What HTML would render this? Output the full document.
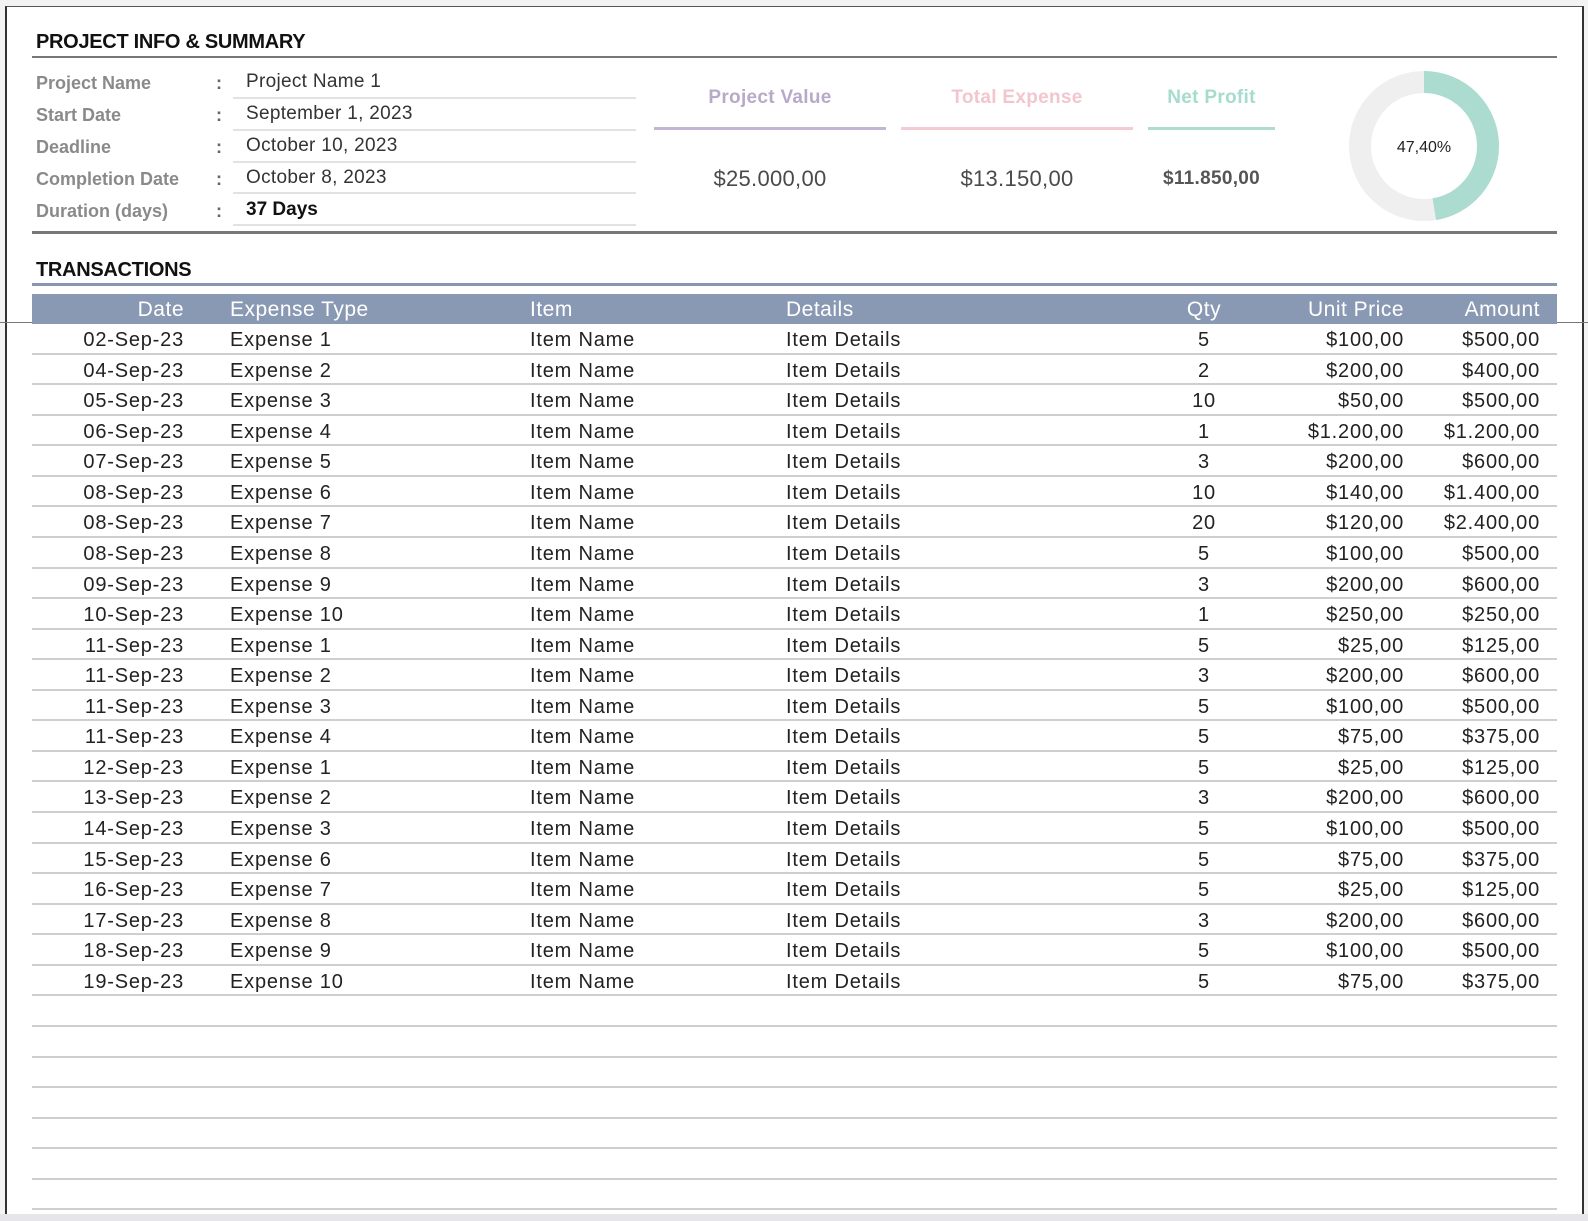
<!DOCTYPE html>
<html><head><meta charset="utf-8"><style>
*{margin:0;padding:0;box-sizing:border-box}
body{width:1588px;height:1221px;background:#f3f3f3;position:relative;overflow:hidden;font-family:"Liberation Sans",sans-serif;color:#222}
.sheet{position:absolute;left:5px;top:6px;width:1579px;height:1215px;background:#fff;border-left:2px solid #333;border-top:1px solid #555;border-right:2px solid #333}
.a{position:absolute;white-space:nowrap}
.h1{font-weight:bold;font-size:20px;color:#111;letter-spacing:-0.3px}
.lbl{font-weight:bold;font-size:18px;color:#8a8a8a;left:36px}
.col{left:216px;font-size:18px;color:#666;font-weight:bold}
.val{left:246px;font-size:19px;color:#333;letter-spacing:0.3px}
.ul{position:absolute;left:233px;width:403px;height:2px;background:#e2e2e2}
.kt{font-weight:bold;font-size:19px;text-align:center;letter-spacing:0.3px}
.kv{font-size:22px;color:#4a4a4a;text-align:center;letter-spacing:0.3px}
.hdr{position:absolute;left:32px;top:294px;width:1525px;height:30px;background:#8a99b3;color:#fff;font-size:21px;letter-spacing:0.5px}
.rows{position:absolute;left:32px;top:324px;width:1525px}
.r{position:relative;height:30.57px;border-bottom:2px solid #cfcfcf;font-size:20px;color:#222;letter-spacing:0.8px}
.r span{position:absolute;top:5px;white-space:nowrap}
.hdr span{position:absolute;top:4px;white-space:nowrap}
.c1{right:1373px;text-align:right}
.c2{left:198px}.c3{left:498px}.c4{left:754px}
.c5{left:1152px;width:40px;text-align:center}
.c6{right:153px}.c7{right:17px}
</style></head><body>
<div class="sheet"></div>
<div class="a" style="left:0;top:322px;width:1588px;height:1px;background:#777"></div>
<div class="a h1" style="left:36px;top:31px">PROJECT INFO &amp; SUMMARY</div>
<div class="a" style="left:32px;top:56px;width:1525px;height:2px;background:#777"></div>

<div class="a lbl" style="top:73px">Project Name</div><div class="a col" style="top:73px">:</div><div class="a val" style="top:71px">Project Name 1</div><div class="ul" style="top:97px"></div>
<div class="a lbl" style="top:105px">Start Date</div><div class="a col" style="top:105px">:</div><div class="a val" style="top:103px">September 1, 2023</div><div class="ul" style="top:129px"></div>
<div class="a lbl" style="top:137px">Deadline</div><div class="a col" style="top:137px">:</div><div class="a val" style="top:135px">October 10, 2023</div><div class="ul" style="top:161px"></div>
<div class="a lbl" style="top:169px">Completion Date</div><div class="a col" style="top:169px">:</div><div class="a val" style="top:167px">October 8, 2023</div><div class="ul" style="top:192px"></div>
<div class="a lbl" style="top:201px">Duration (days)</div><div class="a col" style="top:201px">:</div><div class="a val" style="top:199px;font-weight:bold;color:#111;letter-spacing:0">37 Days</div><div class="ul" style="top:224px"></div>

<div class="a kt" style="left:654px;width:232px;top:87px;color:#b8a9cb">Project Value</div>
<div class="a" style="left:654px;top:127px;width:232px;height:3px;background:#c3b6d4"></div>
<div class="a kv" style="left:654px;width:232px;top:166px">$25.000,00</div>
<div class="a kt" style="left:901px;width:232px;top:87px;color:#f2c6cf">Total Expense</div>
<div class="a" style="left:901px;top:127px;width:232px;height:3px;background:#f2cbd3"></div>
<div class="a kv" style="left:901px;width:232px;top:166px">$13.150,00</div>
<div class="a kt" style="left:1148px;width:127px;top:87px;color:#a6dccd">Net Profit</div>
<div class="a" style="left:1148px;top:127px;width:127px;height:3px;background:#aedccf"></div>
<div class="a kv" style="left:1140px;width:143px;top:168px;font-size:19px;font-weight:bold;color:#555">$11.850,00</div>

<svg class="a" style="left:1344px;top:66px" width="160" height="160" viewBox="0 0 160 160">
<circle cx="80" cy="80" r="64" fill="none" stroke="#efefef" stroke-width="22"/>
<circle cx="80" cy="80" r="64" fill="none" stroke="#abdccf" stroke-width="22" stroke-dasharray="190.6 402.1" transform="rotate(-90 80 80)"/>
<text x="80" y="86" text-anchor="middle" font-family="Liberation Sans" font-size="16" fill="#222">47,40%</text>
</svg>

<div class="a" style="left:32px;top:231px;width:1525px;height:3px;background:#777"></div>
<div class="a h1" style="left:36px;top:259px">TRANSACTIONS</div>
<div class="a" style="left:32px;top:283px;width:1525px;height:3px;background:#8a96ae"></div>

<div class="hdr"><span class="c1">Date</span><span class="c2">Expense Type</span><span class="c3">Item</span><span class="c4">Details</span><span class="c5">Qty</span><span class="c6">Unit Price</span><span class="c7">Amount</span></div>

<div class="rows">
<div class="r"><span class="c1">02-Sep-23</span><span class="c2">Expense 1</span><span class="c3">Item Name</span><span class="c4">Item Details</span><span class="c5">5</span><span class="c6">$100,00</span><span class="c7">$500,00</span></div>
<div class="r"><span class="c1">04-Sep-23</span><span class="c2">Expense 2</span><span class="c3">Item Name</span><span class="c4">Item Details</span><span class="c5">2</span><span class="c6">$200,00</span><span class="c7">$400,00</span></div>
<div class="r"><span class="c1">05-Sep-23</span><span class="c2">Expense 3</span><span class="c3">Item Name</span><span class="c4">Item Details</span><span class="c5">10</span><span class="c6">$50,00</span><span class="c7">$500,00</span></div>
<div class="r"><span class="c1">06-Sep-23</span><span class="c2">Expense 4</span><span class="c3">Item Name</span><span class="c4">Item Details</span><span class="c5">1</span><span class="c6">$1.200,00</span><span class="c7">$1.200,00</span></div>
<div class="r"><span class="c1">07-Sep-23</span><span class="c2">Expense 5</span><span class="c3">Item Name</span><span class="c4">Item Details</span><span class="c5">3</span><span class="c6">$200,00</span><span class="c7">$600,00</span></div>
<div class="r"><span class="c1">08-Sep-23</span><span class="c2">Expense 6</span><span class="c3">Item Name</span><span class="c4">Item Details</span><span class="c5">10</span><span class="c6">$140,00</span><span class="c7">$1.400,00</span></div>
<div class="r"><span class="c1">08-Sep-23</span><span class="c2">Expense 7</span><span class="c3">Item Name</span><span class="c4">Item Details</span><span class="c5">20</span><span class="c6">$120,00</span><span class="c7">$2.400,00</span></div>
<div class="r"><span class="c1">08-Sep-23</span><span class="c2">Expense 8</span><span class="c3">Item Name</span><span class="c4">Item Details</span><span class="c5">5</span><span class="c6">$100,00</span><span class="c7">$500,00</span></div>
<div class="r"><span class="c1">09-Sep-23</span><span class="c2">Expense 9</span><span class="c3">Item Name</span><span class="c4">Item Details</span><span class="c5">3</span><span class="c6">$200,00</span><span class="c7">$600,00</span></div>
<div class="r"><span class="c1">10-Sep-23</span><span class="c2">Expense 10</span><span class="c3">Item Name</span><span class="c4">Item Details</span><span class="c5">1</span><span class="c6">$250,00</span><span class="c7">$250,00</span></div>
<div class="r"><span class="c1">11-Sep-23</span><span class="c2">Expense 1</span><span class="c3">Item Name</span><span class="c4">Item Details</span><span class="c5">5</span><span class="c6">$25,00</span><span class="c7">$125,00</span></div>
<div class="r"><span class="c1">11-Sep-23</span><span class="c2">Expense 2</span><span class="c3">Item Name</span><span class="c4">Item Details</span><span class="c5">3</span><span class="c6">$200,00</span><span class="c7">$600,00</span></div>
<div class="r"><span class="c1">11-Sep-23</span><span class="c2">Expense 3</span><span class="c3">Item Name</span><span class="c4">Item Details</span><span class="c5">5</span><span class="c6">$100,00</span><span class="c7">$500,00</span></div>
<div class="r"><span class="c1">11-Sep-23</span><span class="c2">Expense 4</span><span class="c3">Item Name</span><span class="c4">Item Details</span><span class="c5">5</span><span class="c6">$75,00</span><span class="c7">$375,00</span></div>
<div class="r"><span class="c1">12-Sep-23</span><span class="c2">Expense 1</span><span class="c3">Item Name</span><span class="c4">Item Details</span><span class="c5">5</span><span class="c6">$25,00</span><span class="c7">$125,00</span></div>
<div class="r"><span class="c1">13-Sep-23</span><span class="c2">Expense 2</span><span class="c3">Item Name</span><span class="c4">Item Details</span><span class="c5">3</span><span class="c6">$200,00</span><span class="c7">$600,00</span></div>
<div class="r"><span class="c1">14-Sep-23</span><span class="c2">Expense 3</span><span class="c3">Item Name</span><span class="c4">Item Details</span><span class="c5">5</span><span class="c6">$100,00</span><span class="c7">$500,00</span></div>
<div class="r"><span class="c1">15-Sep-23</span><span class="c2">Expense 6</span><span class="c3">Item Name</span><span class="c4">Item Details</span><span class="c5">5</span><span class="c6">$75,00</span><span class="c7">$375,00</span></div>
<div class="r"><span class="c1">16-Sep-23</span><span class="c2">Expense 7</span><span class="c3">Item Name</span><span class="c4">Item Details</span><span class="c5">5</span><span class="c6">$25,00</span><span class="c7">$125,00</span></div>
<div class="r"><span class="c1">17-Sep-23</span><span class="c2">Expense 8</span><span class="c3">Item Name</span><span class="c4">Item Details</span><span class="c5">3</span><span class="c6">$200,00</span><span class="c7">$600,00</span></div>
<div class="r"><span class="c1">18-Sep-23</span><span class="c2">Expense 9</span><span class="c3">Item Name</span><span class="c4">Item Details</span><span class="c5">5</span><span class="c6">$100,00</span><span class="c7">$500,00</span></div>
<div class="r"><span class="c1">19-Sep-23</span><span class="c2">Expense 10</span><span class="c3">Item Name</span><span class="c4">Item Details</span><span class="c5">5</span><span class="c6">$75,00</span><span class="c7">$375,00</span></div>
<div class="r"></div><div class="r"></div><div class="r"></div><div class="r"></div><div class="r"></div><div class="r"></div><div class="r"></div>
</div>
<div class="a" style="left:0;top:1214px;width:1588px;height:7px;background:#e6e6ea"></div>
</body></html>
